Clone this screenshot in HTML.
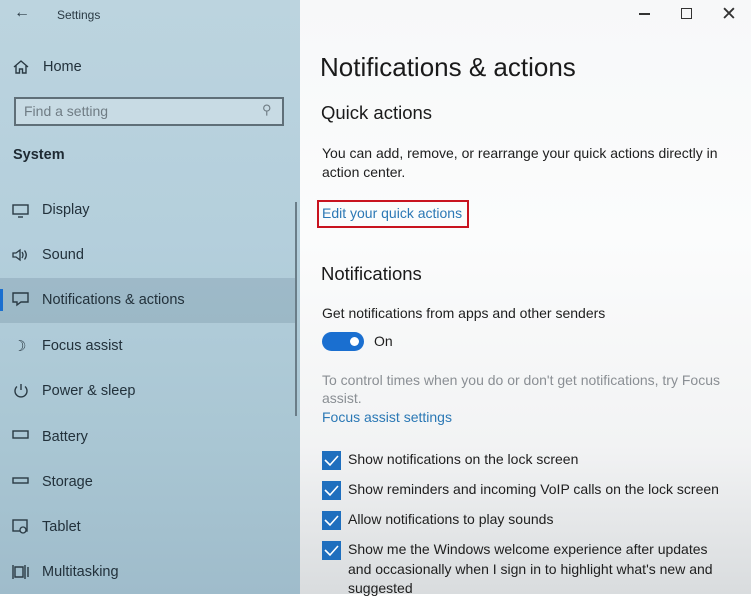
<!DOCTYPE html>
<html><head><style>
*{margin:0;padding:0;box-sizing:border-box}
body{width:751px;height:594px;overflow:hidden;font-family:"Liberation Sans",sans-serif;position:relative;background:#fff}
#side{position:absolute;left:0;top:0;width:300px;height:594px;background:linear-gradient(180deg,#bcd4df 0%,#b4cfdc 40%,#a9c6d3 75%,#9fbccb 100%);color:#1e2a33}
#main{position:absolute;left:300px;top:0;width:451px;height:594px;background:linear-gradient(180deg,#f7f8f9 0%,#fbfcfc 40%,#f2f3f4 75%,#d9dcde 100%);color:#1a1a1a}
.t{position:absolute;white-space:nowrap}
.it{position:absolute;left:42px;font-size:14.5px;color:#22313b}
.ic{position:absolute;left:12px}
.cb{position:absolute;left:322px;width:19px;height:19px;background:#1f6fbe}
.cbt{position:absolute;left:348px;font-size:14px;color:#1e1e1e}
</style></head><body>
<div id="side">
<div class="t" style="left:14px;top:4px;font-size:16px;color:#2a3a44">&#8592;</div>
<div class="t" style="left:57px;top:8px;font-size:12px;color:#2a3a44">Settings</div>
<svg class="ic" style="top:59px" width="18" height="16" viewBox="0 0 18 16"><path d="M2 8 L9 2 L16 8 M4 6.5 V14 H7.5 V10 H10.5 V14 H14 V6.5" fill="none" stroke="#2a3a44" stroke-width="1.4"/></svg>
<div class="it" style="top:59px;left:43px">Home</div>
<div style="position:absolute;left:14px;top:97px;width:270px;height:29px;border:2px solid #5f6f78;background:#c8dbe4"></div>
<div class="t" style="left:24px;top:103px;font-size:14px;color:#6f7c84">Find a setting</div>
<div class="t" style="left:262px;top:102px;font-size:13px;color:#6f7c84">&#9906;</div>
<div class="t" style="left:13px;top:147px;font-size:14.5px;font-weight:bold;color:#1e2a33">System</div>
<svg class="ic" style="top:204px" width="18" height="14"><rect x="1" y="1" width="15" height="9" fill="none" stroke="#2a3a44" stroke-width="1.4"/><path d="M6 13H11" stroke="#2a3a44" stroke-width="1.4"/></svg>
<div class="it" style="top:202px">Display</div>
<svg class="ic" style="top:248px" width="18" height="14"><path d="M1 5H4L8 2V12L4 9H1Z M10 4Q12 7 10 10 M12.5 2.5Q16 7 12.5 11.5" fill="none" stroke="#2a3a44" stroke-width="1.3"/></svg>
<div class="it" style="top:247px">Sound</div>
<div style="position:absolute;left:0;top:278px;width:296px;height:45px;background:rgba(120,150,165,0.35)"></div>
<div style="position:absolute;left:0;top:289px;width:3px;height:22px;background:#1a6fd0"></div>
<svg class="ic" style="top:292px" width="18" height="15"><path d="M1 1H16V10H9L5 13V10H1Z" fill="none" stroke="#2a3a44" stroke-width="1.4"/></svg>
<div class="it" style="top:292px">Notifications &amp; actions</div>
<div class="t" style="left:13px;top:337px;font-size:15px;color:#2a3a44">&#9789;</div>
<div class="it" style="top:338px">Focus assist</div>
<svg class="ic" style="top:383px" width="18" height="16"><path d="M9 1V7 M5 3.5A6 6 0 1 0 13 3.5" fill="none" stroke="#2a3a44" stroke-width="1.4"/></svg>
<div class="it" style="top:383px">Power &amp; sleep</div>
<svg class="ic" style="top:430px" width="18" height="10"><rect x="1" y="1" width="15" height="7" fill="none" stroke="#2a3a44" stroke-width="1.4"/></svg>
<div class="it" style="top:429px">Battery</div>
<svg class="ic" style="top:477px" width="18" height="8"><rect x="1" y="1" width="15" height="5" fill="none" stroke="#2a3a44" stroke-width="1.4"/></svg>
<div class="it" style="top:474px">Storage</div>
<svg class="ic" style="top:519px" width="18" height="16"><rect x="1" y="1" width="14" height="11" fill="none" stroke="#2a3a44" stroke-width="1.4"/><circle cx="11" cy="11" r="3" fill="#b0cad6" stroke="#2a3a44" stroke-width="1.3"/></svg>
<div class="it" style="top:519px">Tablet</div>
<svg class="ic" style="top:564px" width="18" height="16"><path d="M1 1V15 M13 1V15 M3 3H11V13H3Z M16 3V13" fill="none" stroke="#2a3a44" stroke-width="1.4"/></svg>
<div class="it" style="top:564px">Multitasking</div>
<div style="position:absolute;left:295px;top:202px;width:2px;height:214px;background:#6a7d88"></div>
</div>
<div id="main">
<div style="position:absolute;left:339px;top:13px;width:11px;height:2px;background:#333"></div>
<div style="position:absolute;left:381px;top:8px;width:11px;height:11px;border:1.5px solid #333"></div>
<div class="t" style="left:421px;top:3px;font-size:19px;color:#333">&#10005;</div>
<div class="t" style="left:20px;top:52px;font-size:26px;color:#1a1a1a">Notifications &amp; actions</div>
<div class="t" style="left:21px;top:102px;font-size:18.5px;color:#1a1a1a">Quick actions</div>
<div class="t" style="left:22px;top:145px;font-size:14px;color:#1e1e1e">You can add, remove, or rearrange your quick actions directly in</div>
<div class="t" style="left:22px;top:164px;font-size:14px;color:#1e1e1e">action center.</div>
<div style="position:absolute;left:17px;top:200px;width:152px;height:28px;border:2px solid #c8131f"></div>
<div class="t" style="left:22px;top:205px;font-size:14px;color:#2b78b5">Edit your quick actions</div>
<div class="t" style="left:21px;top:263px;font-size:18.5px;color:#1a1a1a">Notifications</div>
<div class="t" style="left:22px;top:305px;font-size:14px;color:#1e1e1e">Get notifications from apps and other senders</div>
<div style="position:absolute;left:22px;top:332px;width:42px;height:19px;border-radius:10px;background:#1a6fd0"></div>
<div style="position:absolute;left:50px;top:337px;width:9px;height:9px;border-radius:50%;background:#fff"></div>
<div class="t" style="left:74px;top:333px;font-size:14px;color:#1e1e1e">On</div>
<div class="t" style="left:22px;top:372px;font-size:14px;color:#8a8f94">To control times when you do or don't get notifications, try Focus</div>
<div class="t" style="left:22px;top:390px;font-size:14px;color:#8a8f94">assist.</div>
<div class="t" style="left:22px;top:409px;font-size:14px;color:#2b78b5">Focus assist settings</div>
</div>
<div class="cb" style="top:451px"></div><div class="cbt" style="top:451px">Show notifications on the lock screen</div>
<div class="cb" style="top:481px"></div><div class="cbt" style="top:481px">Show reminders and incoming VoIP calls on the lock screen</div>
<div class="cb" style="top:511px"></div><div class="cbt" style="top:511px">Allow notifications to play sounds</div>
<div class="cb" style="top:541px"></div><div class="cbt" style="top:541px">Show me the Windows welcome experience after updates</div>
<div class="cbt" style="top:561px">and occasionally when I sign in to highlight what's new and</div>
<div class="cbt" style="top:580px">suggested</div>
<svg style="position:absolute;left:0;top:0" width="751" height="594"><g fill="none" stroke="#fff" stroke-width="1.6"><path d="M325 460l5 5 8-9"/><path d="M325 490l5 5 8-9"/><path d="M325 520l5 5 8-9"/><path d="M325 550l5 5 8-9"/></g></svg>
</body></html>
